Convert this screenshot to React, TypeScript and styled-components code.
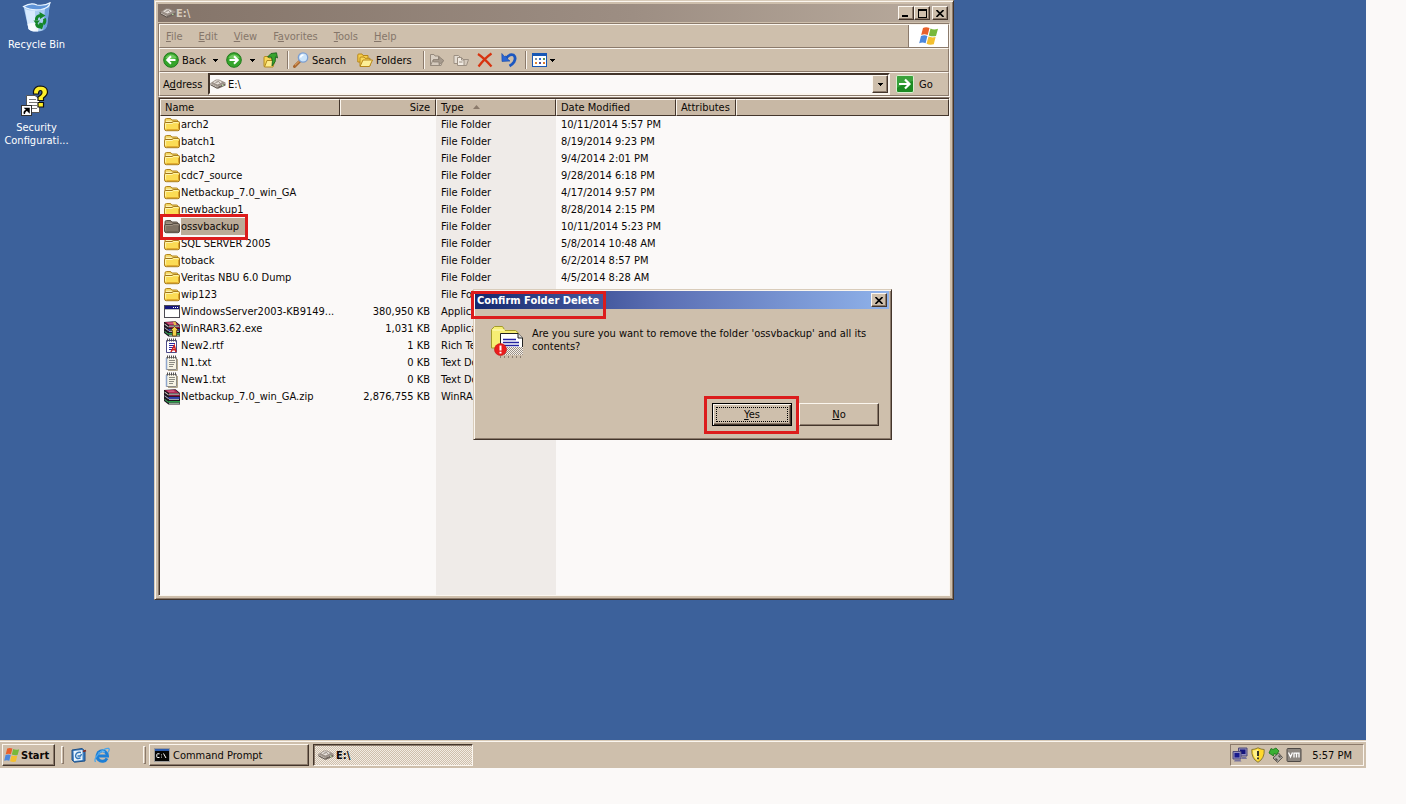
import React from 'react';
import styled, { createGlobalStyle, css } from 'styled-components';

const c = {
  face: '#cebfac',
  light: '#fbf6ef',
  shade: '#8b7a6b',
  dark: '#43352b',
  paper: '#fbf9f8',
  red: '#dc1c1c',
  ink: '#0b0806',
};

const GlobalStyle = createGlobalStyle`
  * { box-sizing: border-box; }
  body {
    margin: 0;
    background: ${c.paper};
    color: ${c.ink};
    font-family: "DejaVu Sans Condensed", "DejaVu Sans", sans-serif;
    font-size: 11px;
    line-height: 13px;
  }
  button, input {
    font: inherit;
    color: inherit;
    margin: 0;
    padding: 0;
    border: 0;
    background: none;
    border-radius: 0;
  }
  svg { display: block; flex: none; }
  h1, h2, p { margin: 0; font: inherit; }
`;

const raised = css`
  border: 1px solid;
  border-color: ${c.light} ${c.dark} ${c.dark} ${c.light};
  box-shadow: inset -1px -1px 0 ${c.shade};
`;

/* ---------- Page ---------- */
const Page = styled.div`
  display: flex;
  min-height: 100vh;
  padding: 0 40px 36px 0;
`;
const Screen = styled.div`
  flex: 1;
  display: flex;
  flex-direction: column;
  background: #3c619b;
  position: relative;
  min-width: 0;
`;
const Desktop = styled.main`
  flex: 1;
  position: relative;
  min-height: 604px;
`;
const Shortcuts = styled.div`
  display: flex;
  flex-direction: column;
  gap: 32px;
  width: 73px;
`;
const Shortcut = styled.button`
  display: flex;
  flex-direction: column;
  align-items: center;
  gap: 4px;
  padding-top: 2px;
  color: #fff;
  text-align: center;
`;

/* ---------- Windows ---------- */
const Frame = styled.section<{ $x: number; $y: number; $w: number; $h: number }>`
  position: absolute;
  left: ${p => p.$x}px;
  top: ${p => p.$y}px;
  width: ${p => p.$w}px;
  min-height: ${p => p.$h}px;
  display: flex;
  flex-direction: column;
  background: ${c.face};
  border: 1px solid;
  border-color: #d9ccba ${c.dark} ${c.dark} #d9ccba;
  box-shadow: inset 1px 1px 0 ${c.light}, inset -1px -1px 0 ${c.shade};
`;
const ExplorerFrame = styled(Frame)`
  padding: 3px;
`;
const DialogFrame = styled(Frame)`
  padding: 1px 2px 2px 1px;
`;
const TitleBar = styled.header<{ $active?: boolean }>`
  display: flex;
  align-items: center;
  height: 18px;
  padding: 0 2px;
  color: ${p => (p.$active ? '#fff' : '#d8ccbe')};
  font-weight: bold;
  background: ${p =>
    p.$active
      ? 'linear-gradient(90deg, #15296f, #5b6fb4 45%, #8fb2ea)'
      : 'linear-gradient(90deg, #847469, #9d8e83 60%, #b9ab9d)'};
`;
const TitleText = styled.h1`
  flex: 1;
`;
const CaptionButton = styled.button<{ $gap?: boolean }>`
  ${raised}
  width: 16px;
  height: 14px;
  margin-left: ${p => (p.$gap ? 2 : 0)}px;
  display: grid;
  place-items: center;
  background: ${c.face};
`;

/* ---------- Explorer bars ---------- */
const Bars = styled.div`
  margin-top: 1px;
  border: 1px solid;
  border-color: ${c.shade} ${c.light} ${c.light} ${c.shade};
`;
const Bar = styled.div`
  display: flex;
  align-items: center;
  height: 24px;
  padding-left: 3px;
  border: 1px solid;
  border-color: ${c.light} ${c.shade} ${c.shade} ${c.light};
`;
const MenuBar = styled(Bar)`
  color: #85766a;
  padding-left: 0;
`;
const MenuItem = styled.button`
  padding: 0 6px;
  margin-right: 4px;
`;
const Throbber = styled.div`
  align-self: stretch;
  margin-left: auto;
  width: 40px;
  display: grid;
  place-items: center;
  background: #fff;
  border-left: 1px solid ${c.shade};
`;
const Tool = styled.button<{ $w: number }>`
  display: flex;
  align-items: center;
  gap: 3px;
  width: ${p => p.$w}px;
  height: 20px;
  white-space: nowrap;
`;
const Divider = styled.span`
  width: 2px;
  height: 18px;
  border-left: 1px solid ${c.shade};
  border-right: 1px solid ${c.light};
  margin: 0 4px 0 0;
`;
const AddressLabel = styled.label`
  width: 45px;
`;
const AddressBox = styled.div`
  flex: 1;
  display: flex;
  align-items: center;
  height: 22px;
  gap: 2px;
  background: ${c.paper};
  border: 2px solid;
  border-color: ${c.dark} ${c.light} ${c.light} ${c.dark};
`;
const AddressInput = styled.input`
  flex: 1;
  min-width: 0;
  outline: 0;
`;
const DropButton = styled.button`
  ${raised}
  width: 16px;
  height: 18px;
  display: grid;
  place-items: center;
  background: ${c.face};
`;
const GoButton = styled.button`
  display: flex;
  align-items: center;
  gap: 5px;
  width: 58px;
  padding-left: 6px;
`;

/* ---------- File list ---------- */
const ListPane = styled.div`
  flex: 1;
  border: 1px solid;
  border-color: ${c.shade} ${c.light} ${c.light} ${c.shade};
  background: linear-gradient(90deg, ${c.paper} 277px, #efebe8 277px 397px, ${c.paper} 397px);
  box-shadow: inset 1px 1px 0 ${c.dark};
  padding: 1px 0 0 1px;
`;
const FileTable = styled.table`
  width: 100%;
  table-layout: fixed;
  border-collapse: separate;
  border-spacing: 0;
`;
const HeadCell = styled.th<{ $right?: boolean }>`
  height: 17px;
  padding: 0 5px 0 4px;
  font-weight: normal;
  text-align: ${p => (p.$right ? 'right' : 'left')};
  white-space: nowrap;
  background: #c8b8a5;
  border: 1px solid;
  border-color: ${c.light} ${c.dark} ${c.dark} ${c.light};
`;
const SortMark = styled.svg`
  display: inline-block;
  margin-left: 9px;
  vertical-align: 2px;
`;
const Cell = styled.td<{ $right?: boolean }>`
  height: 17px;
  padding: 0 6px 0 5px;
  line-height: 17px;
  text-align: ${p => (p.$right ? 'right' : 'left')};
  white-space: nowrap;
`;
const NameCell = styled(Cell)`
  padding: 0 0 0 4px;
`;
const FileName = styled.div`
  position: relative;
  display: flex;
  align-items: center;
  gap: 1px;
  height: 17px;
`;
const FileLabel = styled.span<{ $selected?: boolean }>`
  padding-right: 6px;
  background: ${p => (p.$selected ? '#bbab97' : 'transparent')};
`;
const Mark = styled.span<{ $l: number; $t: number; $w: number; $h: number }>`
  position: absolute;
  z-index: 1;
  left: ${p => p.$l}px;
  top: ${p => p.$t}px;
  width: ${p => p.$w}px;
  height: ${p => p.$h}px;
  border: 3px solid ${c.red};
  pointer-events: none;
`;

/* ---------- Dialog ---------- */
const Message = styled.div`
  display: flex;
  gap: 9px;
  padding: 16px 16px 0;
`;
const MessageText = styled.p`
  padding-top: 2px;
`;
const Actions = styled.div`
  display: flex;
  justify-content: flex-end;
  gap: 7px;
  margin-top: auto;
  padding: 0 10px 11px 0;
`;
const Action = styled.span`
  position: relative;
`;
const PushButton = styled.button<{ $default?: boolean }>`
  ${raised}
  width: 80px;
  height: 23px;
  background: ${c.face};
  ${p =>
    p.$default &&
    css`
      border-color: #000;
      box-shadow: inset 1px 1px 0 ${c.light}, inset -1px -1px 0 ${c.dark}, inset -2px -2px 0 ${c.shade};
      outline: 1px dotted #000;
      outline-offset: -5px;
    `}
`;

/* ---------- Taskbar ---------- */
const Taskbar = styled.footer`
  display: flex;
  align-items: center;
  height: 28px;
  padding: 1px 2px 0;
  background: ${c.face};
  border-top: 1px solid #d9ccba;
  box-shadow: inset 0 1px 0 ${c.light};
`;
const StartButton = styled.button`
  ${raised}
  display: flex;
  align-items: center;
  gap: 1px;
  width: 53px;
  height: 22px;
  padding-left: 1px;
  font-weight: bold;
`;
const Grip = styled.span<{ $l: number; $r: number }>`
  width: 3px;
  height: 18px;
  margin: 0 ${p => p.$r}px 0 ${p => p.$l}px;
  border: 1px solid;
  border-color: ${c.light} ${c.shade} ${c.shade} ${c.light};
`;
const QuickLaunch = styled.div`
  display: flex;
  gap: 7px;
`;
const TaskButton = styled.button<{ $pressed?: boolean }>`
  ${raised}
  display: flex;
  align-items: center;
  gap: 3px;
  flex: 0 1 160px;
  height: 22px;
  padding-left: 4px;
  margin-right: 4px;
  ${p =>
    p.$pressed &&
    css`
      font-weight: bold;
      gap: 2px;
      border-color: ${c.dark} ${c.light} ${c.light} ${c.dark};
      box-shadow: inset 1px 1px 0 ${c.shade};
      background: repeating-conic-gradient(#f3ece3 0 25%, #cebfac 0 50%) 0 0 / 2px 2px;
    `}
`;
const Tray = styled.div`
  display: flex;
  align-items: center;
  gap: 2px;
  width: 134px;
  height: 22px;
  margin-left: auto;
  padding: 0 11px 0 1px;
  border: 1px solid;
  border-color: ${c.shade} ${c.light} ${c.light} ${c.shade};
`;
const Clock = styled.time`
  margin-left: auto;
`;

/* ---------- Icons ---------- */
const FolderIcon = ({ dim = false }: { dim?: boolean }) => (
  <svg width="16" height="16" viewBox="0 0 16 16">
    <path d="M1 12V3Q1 1.500 2.500 1.500H6Q7.200 1.500 7.700 3H12.500Q13.800 3 13.800 4.300V12Z" fill={dim ? '#8d7f70' : '#f3d562'} stroke={dim ? '#5b5047' : '#b3851b'} />
    <path d="M2 4.300H7.500L8.500 5H13" stroke={dim ? '#a99c8d' : '#fffac6'} fill="none" />
    <path d="M.6 6.500Q.6 5.500 1.600 5.500H8L9.200 4.600H14.500Q15.500 4.600 15.500 5.600V12Q15.500 13.700 13.800 13.700H2.300Q.6 13.700.6 12Z" fill={dim ? '#7f7264' : '#fbdc55'} stroke={dim ? '#544a41' : '#a0741a'} />
    <path d="M1.600 11.500V6.500H8.400L9.600 5.600H14.300" fill="none" stroke={dim ? '#9d9081' : '#fff6b0'} />
    <path d="M2.500 12.700H13.500Q14.500 12.500 14.500 11.500V7" fill="none" stroke={dim ? '#6a5d51' : '#dda227'} />
  </svg>
);
const AppIcon = () => (
  <svg width="16" height="16" viewBox="0 0 16 16" shapeRendering="crispEdges">
    <rect x="0" y="1" width="16" height="13" fill="#4c4a52" />
    <rect x="1" y="2" width="14" height="11" fill="#fff" />
    <rect x="1" y="2" width="14" height="3" fill="#15157e" />
    <path d="M9 3h1v1H9zM11 3h1v1h-1zM13 3h1v1h-1z" fill="#fff" />
    <rect x="1" y="5" width="14" height="1" fill="#bbb" />
  </svg>
);
const RarIcon = ({ sfx = false }: { sfx?: boolean }) => (
  <svg width="16" height="16" viewBox="0 0 16 16">
    <path d="M0 1 11.500.2 16 4V15.500H4.500L0 12Z" fill="#1d1420" />
    <path d="M.8 1.300 11 .8 14.800 4H5Z" fill="#b02a54" />
    <path d="M3 1.800 9.500 1.500 11 2.800H4.500Z" fill="#d66b8c" />
    <path d="M5 4.600H15.500V5.600H5Z" fill="#efe6dc" />
    <path d="M.6 2.500 4.600 5.500V6.500L.6 3.700Z" fill="#d9cfc7" />
    <path d="M5 6H16V7.200H5Z" fill="#8e1b40" />
    <path d="M4.500 8H15.500V9.800H4.500Z" fill="#2b3fb4" />
    <path d="M5 9.900H15V10.700H5Z" fill="#dfe2ef" />
    <path d="M.6 6.200 4.600 9.200V10.300L.6 7.300Z" fill="#c9c9dc" />
    <path d="M4.500 12H16V13.500H4.500Z" fill="#27a046" />
    <path d="M5 13.800H15.500V14.700H5Z" fill="#bfe6c4" />
    <path d="M.6 9.700 4.600 12.700V14L.6 11Z" fill="#3aa857" />
    {sfx && <path d="M8.500 15V9.500H6.500L10.500 5.500 14.500 9.500H12.500V15Z" fill="#f3d24c" stroke="#5c430c" strokeWidth=".8" />}
    {sfx && <path d="M9 .8H11.500L12.500 4H10Z" fill="#e3c04c" />}
  </svg>
);
const NoteIcon = ({ rich = false }: { rich?: boolean }) => (
  <svg width="16" height="16" viewBox="0 0 16 16">
    <path d="M2.500 2.500H12.500V14.500H2.500Z" fill={rich ? '#fff' : '#f6f3e4'} stroke={rich ? '#4a4a88' : '#8c8a86'} />
    {!rich && <path d="M2.500 3V14.500" stroke="#8ea5cd" strokeWidth="1.500" />}
    <path d="M3.500 .5v3M5.500 .5v3M7.500 .5v3M9.500 .5v3M11.500 .5v3" stroke="#514f50" />
    <path d="M5 5.500H11M5 7.500H11M5 9.500H10M5 11.500H9" stroke={rich ? '#2828a0' : '#8b8a83'} />
    {rich && <path d="M7 14 10.300 7.500 12 14M8.500 11.800H11.800" fill="none" stroke="#d11f1f" strokeWidth="1.500" />}
    {!rich && <path d="M13.500 4V15.500H4" fill="none" stroke="#b5a98c" />}
  </svg>
);
const DriveIcon = () => (
  <svg width="16" height="16" viewBox="0 0 16 16">
    <path d="M.5 7 7.500 10.800V13L.5 9.300Z" fill="#564d47" />
    <path d="M7.500 10.800 15.500 7.300V9.500L7.500 13Z" fill="#70665f" />
    <path d="M.5 7 6 3.500H9L15.500 6.500V7.300L7.500 10.800Z" fill="#9c9189" />
    <path d="M3 6.300 6.500 4.200 10 4.800 12 6.300 7.500 8.600Z" fill="#e9e3dd" />
    <path d="M5.500 6.400 8.500 5.600 9.800 6.600" fill="none" stroke="#877c74" />
    <path d="M1 8 7 11.200" stroke="#cfc6bd" />
    <path d="M12 9.300H13.500" stroke="#bff0a8" />
  </svg>
);
const ArrowDisc = ({ back = false }: { back?: boolean }) => (
  <svg width="16" height="16" viewBox="0 0 16 16">
    <circle cx="8" cy="8" r="7.300" fill="#35a52b" stroke="#1f7a1b" />
    <path d="M2.500 6A6 6 0 0 1 13.500 6Q8 8 2.500 6Z" fill="#86d873" opacity=".7" />
    <path d={back ? 'M12.500 8H4.500M8 4.200 4.200 8 8 11.800' : 'M3.500 8H11.500M8 4.200 11.800 8 8 11.800'} fill="none" stroke="#fff" strokeWidth="2" />
  </svg>
);
const Caret = () => (
  <svg width="5" height="3" viewBox="0 0 5 3" shapeRendering="crispEdges"><path d="M0 0H5L2.500 3Z" fill="#000" /></svg>
);
const UpIcon = () => (
  <svg width="16" height="16" viewBox="0 0 16 16">
    <path d="M1 14.500V5.500Q1 4.500 2 4.500H4.500L6 6H9V14.500Z" fill="#f7d656" stroke="#b48a20" />
    <path d="M1.500 15 4 8.500H12L10 15Z" fill="#fdeb8a" stroke="#b48a20" />
    <path d="M4.500 5 8 1.500 13.500 .8 14.500 6 12.500 4.800Q13.500 10 9 14 10 9 8.500 5.200Z" fill="#37a42d" stroke="#14591a" strokeWidth=".8" />
  </svg>
);
const SearchIcon = () => (
  <svg width="16" height="16" viewBox="0 0 16 16">
    <path d="M1.500 14.500 7 9" stroke="#a8652c" strokeWidth="3" strokeLinecap="round" />
    <path d="M2 13.300 6.500 9" stroke="#e9ae6c" />
    <circle cx="10" cy="5.500" r="4.700" fill="#cbe4fa" stroke="#7d9fd0" strokeWidth="1.300" />
    <path d="M7.500 5.500Q8 3 10.500 3" fill="none" stroke="#fff" strokeWidth="1.500" />
  </svg>
);
const FoldersIcon = () => (
  <svg width="16" height="16" viewBox="0 0 16 16">
    <path d="M.8 10V3Q.8 2 1.800 2H5L6 3.500H11V10Z" fill="#f7cf4a" stroke="#b8871a" />
    <path d="M3 14V6Q3 5 4 5H7L8 6.300H13V14Z" fill="#f9d85c" stroke="#b8871a" />
    <path d="M3 14.500 6 8H15.500L12.500 14.500Z" fill="#fdef96" stroke="#b8871a" />
  </svg>
);
const MoveIcon = () => (
  <svg width="16" height="16" viewBox="0 0 16 16">
    <path d="M1.500 13.500V2.500H5L6 4H9.500V13.500Z" fill="#d9cfc3" stroke="#95897c" />
    <path d="M1.500 13.500 4 8H14L12 13.500Z" fill="#d5cabd" stroke="#95897c" />
    <path d="M4.500 7.500H10V4.500L15 8.700 10 12.800V10H4.500Z" fill="#a69a8d" stroke="#887c70" strokeWidth=".7" />
  </svg>
);
const CopyIcon = () => (
  <svg width="16" height="16" viewBox="0 0 16 16">
    <path d="M1 3.500H5.500L8 6V11.500H1Z" fill="#e4dcd2" stroke="#9c9083" />
    <path d="M8 13.500 10 7.500H15.500L13.500 13.500Z" fill="#d5cabd" stroke="#9c9083" />
    <path d="M4.500 5.500H8.500L11 8V13.500H4.500Z" fill="#f1ebe3" stroke="#9c9083" />
    <path d="M8.500 5.500V8H11M6 10H9.500" stroke="#9c9083" fill="none" />
  </svg>
);
const DeleteIcon = () => (
  <svg width="16" height="16" viewBox="0 0 16 16">
    <path d="M1 2Q7 6 14.500 14.500M14.500 1.500Q8 6 1.500 14.500" stroke="#d7330f" strokeWidth="2.200" fill="none" />
  </svg>
);
const UndoIcon = () => (
  <svg width="16" height="16" viewBox="0 0 16 16">
    <path d="M5 6.500Q8.500 1.500 12.500 3 15.500 5.500 13 10 11.500 12.300 8.500 14" fill="none" stroke="#1c57c0" strokeWidth="2.800" />
    <path d="M.8 1.500 3.500 4.500 5 4 7 7.500 9 9 1 9.500Z" fill="#2a66d4" stroke="#174aa6" strokeWidth=".6" />
  </svg>
);
const ViewsIcon = () => (
  <svg width="16" height="16" viewBox="0 0 16 16" shapeRendering="crispEdges">
    <rect x="1" y="1" width="15" height="14" fill="#1757b5" />
    <rect x="2" y="4" width="13" height="10" fill="#fff" />
    <path d="M4 6h2v2H4z" fill="#7f93a8" /><path d="M8 6h2v2H8z" fill="#356fca" /><path d="M12 6h2v2h-2z" fill="#58935a" />
    <path d="M4 10h2v2H4z" fill="#e28432" /><path d="M8 10h2v2H8z" fill="#4b4b9a" /><path d="M12 10h2v2h-2z" fill="#e07a2c" />
  </svg>
);
const GoIcon = () => (
  <svg width="18" height="18" viewBox="0 0 18 18">
    <rect x=".5" y=".5" width="17" height="17" rx="1.500" fill="#1c8a22" stroke="#d9efcf" />
    <path d="M1 1H17V6Q8 8 1 13Z" fill="#4fb04c" opacity=".6" />
    <path d="M3 9H13M9 4.500 13.500 9 9 13.500" fill="none" stroke="#fff" strokeWidth="2.200" />
  </svg>
);
const FlagIcon = ({ size }: { size: number }) => (
  <svg width={size} height={size} viewBox="0 0 20 20">
    <path d="M4 2Q7 .3 10.500 2L8.700 9Q5.500 7.700 2.200 9Z" fill="#e8602b" />
    <path d="M11.500 2.600Q15 4.300 19 2.800L17 9.900Q13.500 11 9.800 9.400Z" fill="#78b83a" />
    <path d="M2 10Q5.500 8.600 8.400 10L6.600 17.200Q3.500 15.800.2 17.200Z" fill="#4c87dc" />
    <path d="M9.500 10.600Q13 12 16.600 10.900L14.800 18.200Q11 19.400 7.600 17.700Z" fill="#f3bf2f" />
  </svg>
);
const CloseGlyph = () => (
  <svg width="8" height="7" viewBox="0 0 8 7"><path d="M.5 0 7.500 7M7.500 0 .5 7" stroke="#000" strokeWidth="1.600" /></svg>
);
const RecycleIcon = () => (
  <svg width="32" height="32" viewBox="0 0 32 32">
    <path d="M2.500 4.500Q10 0 16 3 24 4 29 .8L26 24Q24 29 17 29.500 10 30 7.500 27Z" fill="#a9cdf2" />
    <path d="M2.500 4.500Q10 0 16 3 24 4 29 .8 28 6 20 7.500 10 9 2.500 4.500Z" fill="#5f94d8" stroke="#eaf5ff" strokeWidth="1.200" />
    <path d="M4 7Q9 9 14 8.500L14.500 29Q9.500 29 7.500 27Z" fill="#e3f1ff" opacity=".8" />
    <path d="M24 7 28.300 5 26 24Q25 27 22 28.500Z" fill="#5c93d8" opacity=".8" />
    <path d="M6.500 22Q14 19 18 24L17 29.500Q10 30 7.500 27Z" fill="#fff" opacity=".8" />
    <g fill="none" stroke="#14862a" strokeWidth="3">
      <path d="M15.500 18.500Q15 13.500 20 13.500" /><path d="M23.500 16.500Q24.500 20 22.500 22" /><path d="M21 25Q16 25.500 15.500 21.500" />
    </g>
    <path d="M18.500 10 24.500 13.500 19 17ZM18.500 20.500 23 21.500 21 27.500 17.500 24.500ZM12.500 18.500 19 18.500 15.500 22.500Z" fill="#14862a" />
  </svg>
);
const HelpDocIcon = () => (
  <svg width="32" height="32" viewBox="0 0 32 32">
    <path d="M5.500 10.500H14L18.500 14V27.500H5.500Z" fill="#fff" stroke="#555" />
    <path d="M8 14.500H15M8 17.500H16M8 20.500H16M8 23.500H16" stroke="#777" />
    <path d="M12.500 9V6Q14 1 19.500 1 26.500 1.500 26.500 7 26.500 10 22.500 13V15.500H17V12Q21 9.500 21 7.500 21 5.500 19.500 5.500 17.500 5.500 17.500 9Z" fill="#fff02a" stroke="#111" strokeWidth="1.200" />
    <path d="M17 17.500H22.500V22H17Z" fill="#fff02a" stroke="#111" strokeWidth="1.200" />
    <rect x=".5" y="20.500" width="10" height="10" fill="#fff" stroke="#333" />
    <path d="M3.500 29Q2.500 26 5.500 25.500M4.500 23.500H8V27Z" fill="#000" stroke="#000" strokeWidth="1.500" />
  </svg>
);
const ShredIcon = () => (
  <svg width="32" height="34" viewBox="0 0 32 34">
    <path d="M.5 23V4.500L3.500 1.500H11.500L14 5.500H24.500L27.500 8V23Z" fill="#f7ee74" stroke="#a29a2c" />
    <path d="M1.500 5H14" stroke="#fffcc2" />
    <path d="M9.500 8.500H27L31.500 13V23H9.500Z" fill="#fff" stroke="#222" />
    <path d="M27 8.500V13H31.500" fill="#ddd" stroke="#222" />
    <path d="M12 14.500H25M12 17.500H28M12 20.500H28" stroke="#2424a0" strokeWidth="1.500" />
    <g shapeRendering="crispEdges">
      <path d="M10 22H32V30H10Z" fill="#f6f1ea" />
      <path d="M10 22.500H32M10 24.500H32M10 26.500H32M10 28.500H32" stroke="#9b9087" strokeDasharray="1 1" />
      <path d="M11 23.500H32M11 25.500H32M11 27.500H32M11 29.500H32" stroke="#9b9087" strokeDasharray="1 1" />
      <path d="M9.500 31V33M13.500 31V33M17.500 31V33M21.500 31V33M25.500 31V33M29.500 31V33" stroke="#8b7f73" />
    </g>
    <circle cx="9.500" cy="24.500" r="6" fill="#ea1c1c" stroke="#c01010" strokeWidth=".6" />
    <path d="M9.500 20.500V25.500M9.500 26.800V28.500" stroke="#fff" strokeWidth="2" />
  </svg>
);
const DesktopLaunchIcon = () => (
  <svg width="16" height="16" viewBox="0 0 16 16">
    <path d="M1 3 11 1.500 14 4V14L3.500 15.200 1 13Z" fill="#3a7cc0" stroke="#1d4f86" />
    <path d="M2.500 4 11.500 3V13L3 14Z" fill="#eaf5fd" />
    <path d="M10 5.500Q5 4.500 4.500 9 5 12.500 9.500 11M6.500 9H9.500L10.500 7" fill="none" stroke="#3275b5" strokeWidth="1.400" />
    <path d="M12 4.500 15 3.500" stroke="#8a2c20" strokeWidth="1.800" />
  </svg>
);
const IeIcon = () => (
  <svg width="16" height="16" viewBox="0 0 16 16">
    <path d="M13 11.300A5.200 5.200 0 1 1 13.500 9H4.500" fill="none" stroke="#1d7fd6" strokeWidth="3" />
    <path d="M4 6.500Q7.500 2.800 11 5" fill="none" stroke="#7cc4f6" />
    <path d="M1.500 15Q-.5 12 5 6.500 11 .8 14.800 1.500 16 2.500 14 5.500" fill="none" stroke="#4aa5ea" strokeWidth="1.300" />
  </svg>
);
const CmdIcon = () => (
  <svg width="16" height="14" viewBox="0 0 16 14">
    <rect x=".5" y=".5" width="15" height="13" fill="#050505" stroke="#9a9a9a" />
    <rect x="1" y="1" width="14" height="2" fill="#2c5cb0" />
    <path d="M5.500 5.800H3.500Q2.800 5.800 2.800 6.500V8.800Q2.800 9.500 3.500 9.500H5.500M7.500 6.500V7.300M7.500 8.700V9.500M9.500 5.500 12 10" fill="none" stroke="#fff" />
  </svg>
);
const NetworkIcon = () => (
  <svg width="16" height="16" viewBox="0 0 16 16">
    <path d="M6.500 1H15V9H6.500Z" fill="#8f8bc0" stroke="#4e4a78" /><path d="M8 2.500H13.500V7H8Z" fill="#14147c" />
    <path d="M1 4.500H9V12H1Z" fill="#8f8bc0" stroke="#4e4a78" /><path d="M2.500 6H7.500V10.500H2.500Z" fill="#191a8c" />
    <path d="M3 12.500H8L9.500 14.500H2Z" fill="#77739c" /><path d="M10 10H14L15 12H10Z" fill="#77739c" />
  </svg>
);
const ShieldIcon = () => (
  <svg width="16" height="16" viewBox="0 0 16 16">
    <path d="M8 .8Q11 2.500 14.200 2.500 14.800 11.500 8 15.300 1.200 11.500 1.800 2.500 5 2.500 8 .8Z" fill="#ffd92c" stroke="#8a7a38" />
    <path d="M8 2.300Q5.500 3.500 3 3.600 3 10.500 8 13.800Z" fill="#fff08a" />
    <path d="M8 4V9M8 10.500V12.300" stroke="#222" strokeWidth="1.800" />
  </svg>
);
const SafeRemoveIcon = () => (
  <svg width="16" height="16" viewBox="0 0 16 16">
    <path d="M5 11 10.500 6 14.500 10.500 9.500 15.300Z" fill="#b5b0aa" stroke="#55504b" />
    <path d="M7.500 11.500 9.500 13.500M10.500 8.500 12.500 10.500" stroke="#55504b" strokeWidth="1.500" />
    <path d="M1 6 3 1.500 5 2.500 8 1 11 4 8.500 7.500 6 6.500 5.500 9Z" fill="#3bb034" stroke="#186d18" strokeWidth=".8" />
  </svg>
);
const VmIcon = () => (
  <svg width="16" height="16" viewBox="0 0 16 16">
    <rect x="1" y="1.500" width="14" height="13" rx="1" fill="#8d8781" stroke="#4f4a46" />
    <path d="M2.500 5.500 4.500 10 6.500 5.500M8 10.500V6.200H10.500V10.500M10.500 6.200H13V10.500" fill="none" stroke="#fff" strokeWidth="1.300" />
  </svg>
);

/* ---------- Data ---------- */
type Kind = 'folder' | 'app' | 'sfx' | 'rtf' | 'txt' | 'zip';
type FileRow = { name: string; size?: string; type: string; date: string; kind: Kind; selected?: boolean };

const folder = (name: string, date: string, selected = false): FileRow => ({ name, date, selected, type: 'File Folder', kind: 'folder' });

const files: FileRow[] = [
  folder('arch2', '10/11/2014 5:57 PM'),
  folder('batch1', '8/19/2014 9:23 PM'),
  folder('batch2', '9/4/2014 2:01 PM'),
  folder('cdc7_source', '9/28/2014 6:18 PM'),
  folder('Netbackup_7.0_win_GA', '4/17/2014 9:57 PM'),
  folder('newbackup1', '8/28/2014 2:15 PM'),
  folder('ossvbackup', '10/11/2014 5:23 PM', true),
  folder('SQL SERVER 2005', '5/8/2014 10:48 AM'),
  folder('toback', '6/2/2014 8:57 PM'),
  folder('Veritas NBU 6.0 Dump', '4/5/2014 8:28 AM'),
  folder('wip123', ''),
  { name: 'WindowsServer2003-KB9149...', size: '380,950 KB', type: 'Application', date: '', kind: 'app' },
  { name: 'WinRAR3.62.exe', size: '1,031 KB', type: 'Application', date: '', kind: 'sfx' },
  { name: 'New2.rtf', size: '1 KB', type: 'Rich Text Format', date: '', kind: 'rtf' },
  { name: 'N1.txt', size: '0 KB', type: 'Text Document', date: '', kind: 'txt' },
  { name: 'New1.txt', size: '0 KB', type: 'Text Document', date: '', kind: 'txt' },
  { name: 'Netbackup_7.0_win_GA.zip', size: '2,876,755 KB', type: 'WinRAR ZIP archive', date: '', kind: 'zip' },
];

const FileIcon = ({ kind, dim }: { kind: Kind; dim?: boolean }) => {
  switch (kind) {
    case 'app': return <AppIcon />;
    case 'sfx': return <RarIcon sfx />;
    case 'zip': return <RarIcon />;
    case 'rtf': return <NoteIcon rich />;
    case 'txt': return <NoteIcon />;
    default: return <FolderIcon dim={dim} />;
  }
};

const Explorer = () => (
  <ExplorerFrame $x={154} $y={0} $w={800} $h={600} aria-label="E:\">
    <TitleBar>
      <DriveIcon />
      <TitleText>E:\</TitleText>
      <CaptionButton aria-label="Minimize"><svg width="8" height="7"><rect x="0" y="5" width="6" height="2" /></svg></CaptionButton>
      <CaptionButton aria-label="Maximize"><svg width="9" height="9" shapeRendering="crispEdges"><path d="M0 0H9V9H0ZM1 2V8H8V2Z" fillRule="evenodd" /></svg></CaptionButton>
      <CaptionButton $gap aria-label="Close"><CloseGlyph /></CaptionButton>
    </TitleBar>
    <Bars>
      <MenuBar as="nav">
        <MenuItem><u>F</u>ile</MenuItem>
        <MenuItem><u>E</u>dit</MenuItem>
        <MenuItem><u>V</u>iew</MenuItem>
        <MenuItem>F<u>a</u>vorites</MenuItem>
        <MenuItem><u>T</u>ools</MenuItem>
        <MenuItem><u>H</u>elp</MenuItem>
        <Throbber><FlagIcon size={20} /></Throbber>
      </MenuBar>
      <Bar>
        <Tool $w={50}><ArrowDisc back />Back</Tool>
        <Tool $w={13} aria-label="Back history"><Caret /></Tool>
        <Tool $w={24} aria-label="Forward"><ArrowDisc /></Tool>
        <Tool $w={13} aria-label="Forward history"><Caret /></Tool>
        <Tool $w={24} aria-label="Up"><UpIcon /></Tool>
        <Divider />
        <Tool $w={64}><SearchIcon />Search</Tool>
        <Tool $w={66}><FoldersIcon />Folders</Tool>
        <Divider />
        <Tool $w={24} aria-label="Move to"><MoveIcon /></Tool>
        <Tool $w={24} aria-label="Copy to"><CopyIcon /></Tool>
        <Tool $w={24} aria-label="Delete"><DeleteIcon /></Tool>
        <Tool $w={24} aria-label="Undo"><UndoIcon /></Tool>
        <Divider />
        <Tool $w={28} aria-label="Views"><ViewsIcon /><Caret /></Tool>
      </Bar>
      <Bar>
        <AddressLabel htmlFor="address">A<u>d</u>dress</AddressLabel>
        <AddressBox>
          <DriveIcon />
          <AddressInput id="address" defaultValue="E:\" />
          <DropButton aria-label="Show addresses"><Caret /></DropButton>
        </AddressBox>
        <GoButton><GoIcon />Go</GoButton>
      </Bar>
    </Bars>
    <ListPane>
      <FileTable>
        <colgroup>
          <col width="180" /><col width="96" /><col width="120" /><col width="120" /><col width="60" /><col />
        </colgroup>
        <thead>
          <tr>
            <HeadCell>Name</HeadCell>
            <HeadCell $right>Size</HeadCell>
            <HeadCell>Type<SortMark width="7" height="4"><path d="M0 4H7L3.500 0Z" fill={c.shade} /></SortMark></HeadCell>
            <HeadCell>Date Modified</HeadCell>
            <HeadCell>Attributes</HeadCell>
            <HeadCell aria-hidden />
          </tr>
        </thead>
        <tbody>
          {files.map(f => (
            <tr key={f.name}>
              <NameCell>
                <FileName>
                  <FileIcon kind={f.kind} dim={f.selected} />
                  <FileLabel $selected={f.selected}>{f.name}</FileLabel>
                  {f.selected && <Mark $l={-4} $t={-4} $w={88} $h={26} />}
                </FileName>
              </NameCell>
              <Cell $right>{f.size}</Cell>
              <Cell>{f.type}</Cell>
              <Cell>{f.date}</Cell>
              <Cell />
              <Cell />
            </tr>
          ))}
        </tbody>
      </FileTable>
    </ListPane>
  </ExplorerFrame>
);

const ConfirmDialog = () => (
  <DialogFrame $x={473} $y={289} $w={419} $h={151} role="dialog" aria-label="Confirm Folder Delete">
    <TitleBar $active>
      <TitleText>Confirm Folder Delete</TitleText>
      <CaptionButton aria-label="Close"><CloseGlyph /></CaptionButton>
    </TitleBar>
    <Mark $l={-3} $t={1} $w={135} $h={28} />
    <Message>
      <ShredIcon />
      <MessageText>Are you sure you want to remove the folder 'ossvbackup' and all its<br />contents?</MessageText>
    </Message>
    <Actions>
      <Action>
        <PushButton $default><u>Y</u>es</PushButton>
        <Mark $l={-8} $t={-7} $w={95} $h={38} />
      </Action>
      <PushButton><u>N</u>o</PushButton>
    </Actions>
  </DialogFrame>
);

export default function App() {
  return (
    <>
      <GlobalStyle />
      <Page>
        <Screen>
          <Desktop>
            <Shortcuts>
              <Shortcut><RecycleIcon />Recycle Bin</Shortcut>
              <Shortcut><HelpDocIcon /><span>Security<br />Configurati...</span></Shortcut>
            </Shortcuts>
            <Explorer />
            <ConfirmDialog />
          </Desktop>
          <Taskbar>
            <StartButton><FlagIcon size={16} />Start</StartButton>
            <Grip $l={6} $r={7} />
            <QuickLaunch>
              <button aria-label="Show desktop"><DesktopLaunchIcon /></button>
              <button aria-label="Internet Explorer"><IeIcon /></button>
            </QuickLaunch>
            <Grip $l={33} $r={3} />
            <TaskButton><CmdIcon />Command Prompt</TaskButton>
            <TaskButton $pressed><DriveIcon />E:\</TaskButton>
            <Tray>
              <NetworkIcon /><ShieldIcon /><SafeRemoveIcon /><VmIcon />
              <Clock>5:57 PM</Clock>
            </Tray>
          </Taskbar>
        </Screen>
      </Page>
    </>
  );
}
